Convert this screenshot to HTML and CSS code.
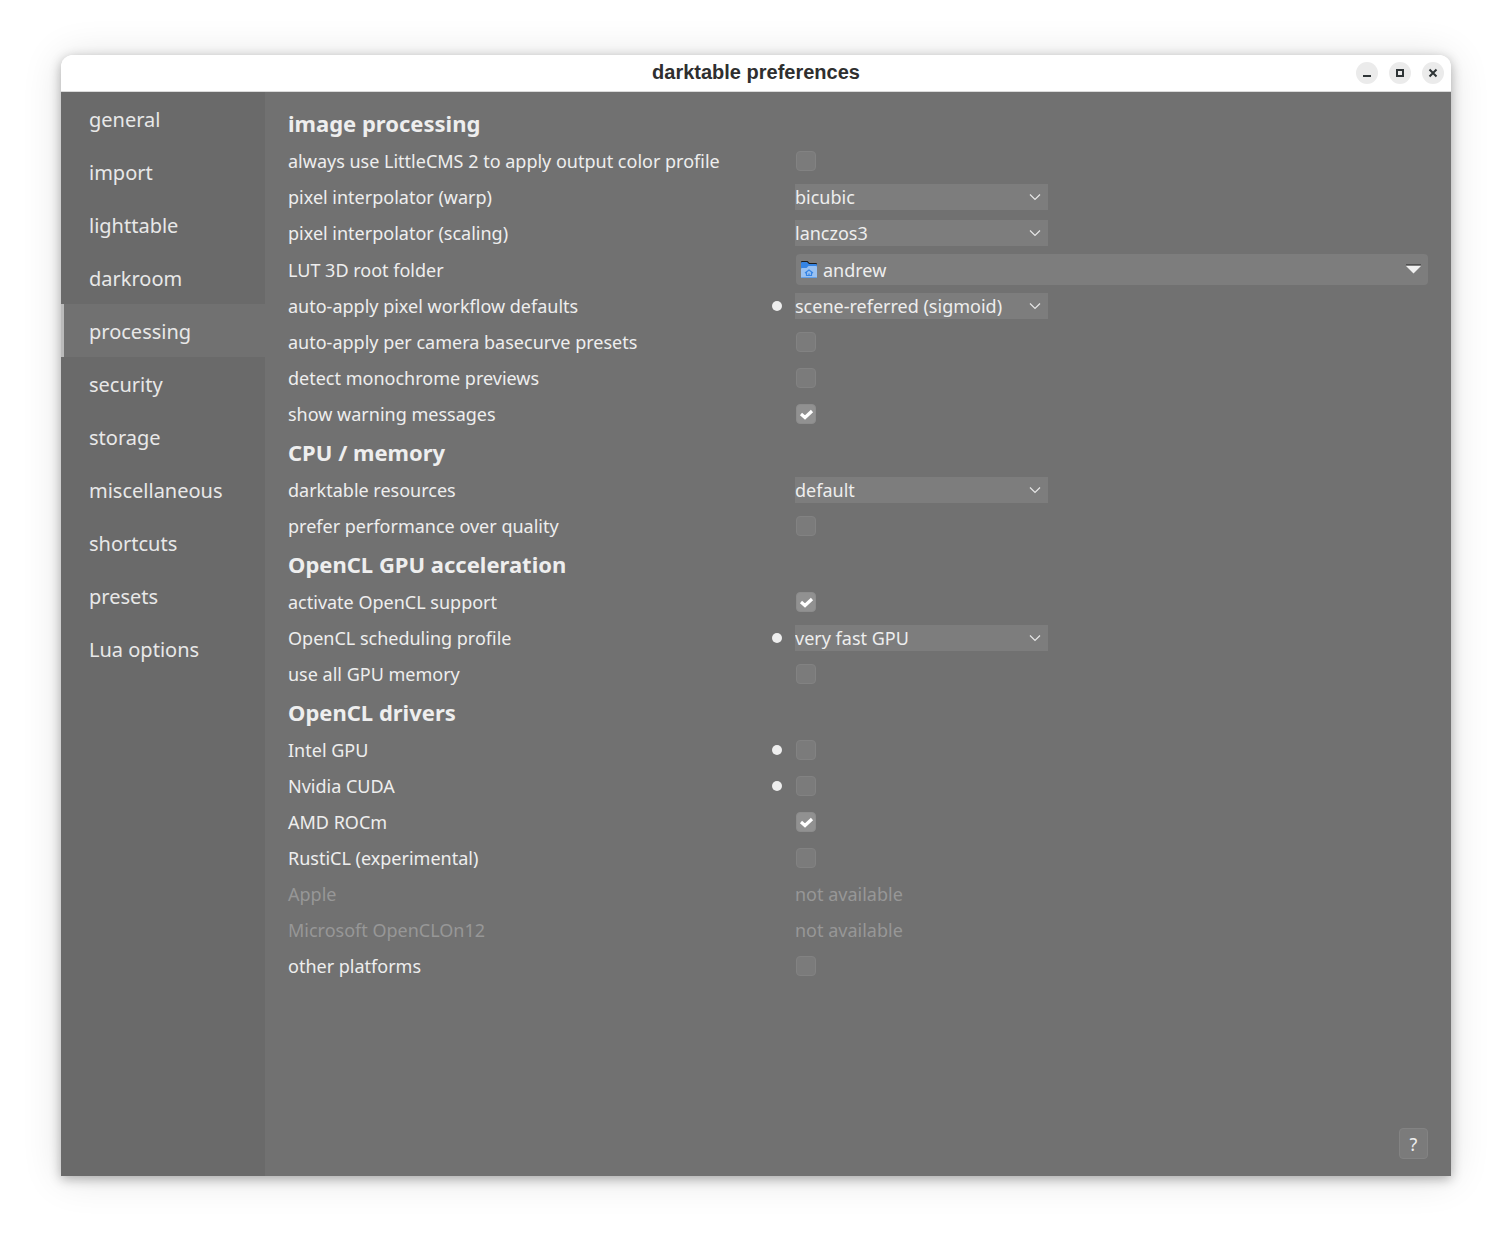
FILE: index.html
```html
<!DOCTYPE html>
<html lang="en">
<head>
    <meta charset="UTF-8">
    <meta name="viewport" content="width=device-width, initial-scale=1.0">
    <title>darktable preferences</title>
    <link rel="stylesheet" href="styles.css">
</head>
<body>
    <div class="window">
        <header class="titlebar">
            <h1>darktable preferences</h1>
            <div class="window-buttons">
                <button type="button" aria-label="Minimize"><svg width="22" height="22" viewBox="0 0 22 22"><path d="M7 13h8v2H7z" fill="#2e3436"/></svg></button>
                <button type="button" aria-label="Maximize"><svg width="22" height="22" viewBox="0 0 22 22"><path d="M8 8h6v6H8z" fill="none" stroke="#2e3436" stroke-width="2"/></svg></button>
                <button type="button" aria-label="Close"><svg width="22" height="22" viewBox="0 0 22 22"><path d="M7.5 7.5l7 7M14.5 7.5l-7 7" stroke="#2e3436" stroke-width="2"/></svg></button>
            </div>
        </header>
        <div class="main">
            <nav class="sidebar">
                <a href="#general">general</a>
                <a href="#import">import</a>
                <a href="#lighttable">lighttable</a>
                <a href="#darkroom">darkroom</a>
                <a href="#processing" class="active">processing</a>
                <a href="#security">security</a>
                <a href="#storage">storage</a>
                <a href="#miscellaneous">miscellaneous</a>
                <a href="#shortcuts">shortcuts</a>
                <a href="#presets">presets</a>
                <a href="#lua">Lua options</a>
            </nav>
            <form class="content">
                <h2>image processing</h2>
                <div class="row">
                    <label for="lcms">always use LittleCMS 2 to apply output color profile</label>
                    <input type="checkbox" id="lcms">
                </div>
                <div class="row">
                    <label for="warp">pixel interpolator (warp)</label>
                    <select id="warp"><option>bicubic</option></select>
                </div>
                <div class="row">
                    <label for="scaling">pixel interpolator (scaling)</label>
                    <select id="scaling"><option>lanczos3</option></select>
                </div>
                <div class="row">
                    <label for="lut">LUT 3D root folder</label>
                    <button type="button" id="lut" class="folder">
                        <svg width="16" height="17" viewBox="0 0 16 17">
                            <path d="M0 1q0-1 1-1h5.500l2 2H15q1 0 1 1v3H0z" fill="#1d1d1d"/>
                            <path d="M0 2q0-1 1-1h5l2 2h7q1 0 1 1v6H0z" fill="#3584e4"/>
                            <path d="M0 8q0-1 1-1h4.500l2-2H15q1 0 1 1v10q0 1-1 1H1q-1 0-1-1z" fill="#99c1f1"/>
                            <path d="M0 16h16q0 1-1 1H1q-1 0-1-1z" fill="#62a0ea"/>
                            <path d="M4 12l4-3 4 3M5.500 11.500v3h5v-3M8 14.500v-2" fill="none" stroke="#3584e4" stroke-width="1.200"/>
                        </svg>
                        <span>andrew</span>
                        <svg class="arrow" width="15" height="11" viewBox="0 0 15 11">
                            <path d="M0 0h15v1H0z" fill="#505050"/>
                            <path d="M0 2h15l-7.500 7.500z" fill="#f0f0f0"/>
                        </svg>
                    </button>
                </div>
                <div class="row changed">
                    <label for="workflow">auto-apply pixel workflow defaults</label>
                    <select id="workflow"><option>scene-referred (sigmoid)</option></select>
                </div>
                <div class="row">
                    <label for="basecurve">auto-apply per camera basecurve presets</label>
                    <input type="checkbox" id="basecurve">
                </div>
                <div class="row">
                    <label for="monochrome">detect monochrome previews</label>
                    <input type="checkbox" id="monochrome">
                </div>
                <div class="row">
                    <label for="warnings">show warning messages</label>
                    <input type="checkbox" id="warnings" checked>
                </div>

                <h2>CPU / memory</h2>
                <div class="row">
                    <label for="resources">darktable resources</label>
                    <select id="resources"><option>default</option></select>
                </div>
                <div class="row">
                    <label for="performance">prefer performance over quality</label>
                    <input type="checkbox" id="performance">
                </div>

                <h2>OpenCL GPU acceleration</h2>
                <div class="row">
                    <label for="opencl">activate OpenCL support</label>
                    <input type="checkbox" id="opencl" checked>
                </div>
                <div class="row changed">
                    <label for="scheduling">OpenCL scheduling profile</label>
                    <select id="scheduling"><option>very fast GPU</option></select>
                </div>
                <div class="row">
                    <label for="gpu-memory">use all GPU memory</label>
                    <input type="checkbox" id="gpu-memory">
                </div>

                <h2>OpenCL drivers</h2>
                <div class="row changed">
                    <label for="intel">Intel GPU</label>
                    <input type="checkbox" id="intel">
                </div>
                <div class="row changed">
                    <label for="nvidia">Nvidia CUDA</label>
                    <input type="checkbox" id="nvidia">
                </div>
                <div class="row">
                    <label for="amd">AMD ROCm</label>
                    <input type="checkbox" id="amd" checked>
                </div>
                <div class="row">
                    <label for="rusticl">RustiCL (experimental)</label>
                    <input type="checkbox" id="rusticl">
                </div>
                <div class="row disabled">
                    <span>Apple</span>
                    <span>not available</span>
                </div>
                <div class="row disabled">
                    <span>Microsoft OpenCLOn12</span>
                    <span>not available</span>
                </div>
                <div class="row">
                    <label for="other">other platforms</label>
                    <input type="checkbox" id="other">
                </div>

                <button type="button" class="help">?</button>
            </form>
        </div>
    </div>
</body>
</html>
```
FILE: styles.css
```css
* {
    box-sizing: border-box;
}

body {
    margin: 0;
    padding: 55px 61px 67px;
    min-height: 100vh;
    display: flex;
    background-color: #fff;
    color: #eee;
    font-family: 'Noto Sans', sans-serif;
    font-size: 18px;
    line-height: 26px;
}

button, select {
    font: inherit;
    color: inherit;
    padding: 0;
    border: none;
}

.window {
    flex: 1;
    display: flex;
    flex-direction: column;
    border-radius: 12px 12px 0 0;
    box-shadow: 0 3px 12px rgba(0, 0, 0, 0.3), 0 2px 40px rgba(0, 0, 0, 0.12);
    overflow: hidden;
}

.titlebar {
    display: grid;
    grid-template-columns: 1fr auto 1fr;
    align-items: center;
    height: 37px;
    padding: 0 7px;
    background-color: #fff;
    border-bottom: 1px solid #dadada;
}

.titlebar h1 {
    grid-column: 2;
    margin: 0;
    padding-bottom: 2px;
    color: #2f2f2f;
    font-family: 'Liberation Sans', Arial, sans-serif;
    font-size: 20px;
    line-height: 32px;
}

.window-buttons {
    display: flex;
    justify-content: flex-end;
    gap: 11px;
}

.window-buttons button {
    width: 22px;
    height: 22px;
    border-radius: 50%;
    background-color: #ebebeb;
}

.window-buttons svg {
    display: block;
}

.main {
    flex: 1;
    display: flex;
    background-color: #717171;
}

.sidebar {
    width: 204px;
    background-color: #6a6a6a;
}

.sidebar a {
    display: block;
    padding: 2px 0 0 25px;
    border-left: 3px solid transparent;
    color: #e8e8e8;
    font-size: 20px;
    line-height: 51px;
    text-decoration: none;
}

.sidebar a.active {
    background-color: #717171;
    border-left-color: #bababa;
}

.content {
    flex: 1;
    display: flex;
    flex-direction: column;
    padding: 11px 23px 17px;
}

h2 {
    margin: 0;
    font-size: 22px;
    line-height: 40px;
}

/* label, modified dot, widget */
.row {
    display: grid;
    grid-template-columns: 484px 10px 1fr;
    align-items: center;
    min-height: 36px;
}

.row > :last-child {
    grid-column: 3;
    margin-left: 13px;
}

.row.changed::before {
    content: "";
    grid-column: 2;
    grid-row: 1;
    width: 10px;
    height: 10px;
    border-radius: 50%;
    background-color: #eee;
}

.row.disabled {
    color: #979797;
}

select {
    appearance: none;
    width: 253px;
    height: 26px;
    border-radius: 0;
    background: #7d7d7d url("data:image/svg+xml,%3Csvg xmlns='http://www.w3.org/2000/svg' width='12' height='8'%3E%3Cpath d='M1 1.500l5 5 5-5' fill='none' stroke='%23e6e6e6' stroke-width='1.200'/%3E%3C/svg%3E") no-repeat right 7px center;
}

input[type="checkbox"] {
    appearance: none;
    width: 20px;
    height: 20px;
    margin: 0;
    border: 1px solid #828282;
    border-radius: 4px;
    background: #7b7b7b no-repeat center;
}

.row > input[type="checkbox"],
.row > .folder {
    margin-left: 14px;
}

input[type="checkbox"]:checked {
    border-color: #8c8c8c;
    background-color: #919191;
    background-image: url("data:image/svg+xml,%3Csvg xmlns='http://www.w3.org/2000/svg' width='16' height='14'%3E%3Cpath d='M3 7l4 3.500L14 4' fill='none' stroke='white' stroke-width='3.200'/%3E%3C/svg%3E");
}

.folder {
    display: flex;
    align-items: center;
    gap: 6px;
    height: 31px;
    margin: 3px 0;
    padding: 0 7px 0 5px;
    border-radius: 4px;
    background-color: #7d7d7d;
}

.folder .arrow {
    margin-left: auto;
}

.help {
    align-self: flex-end;
    width: 29px;
    height: 31px;
    margin-top: auto;
    border: 1px solid #838383;
    border-radius: 4px;
    background-color: #7b7b7b;
}
```
